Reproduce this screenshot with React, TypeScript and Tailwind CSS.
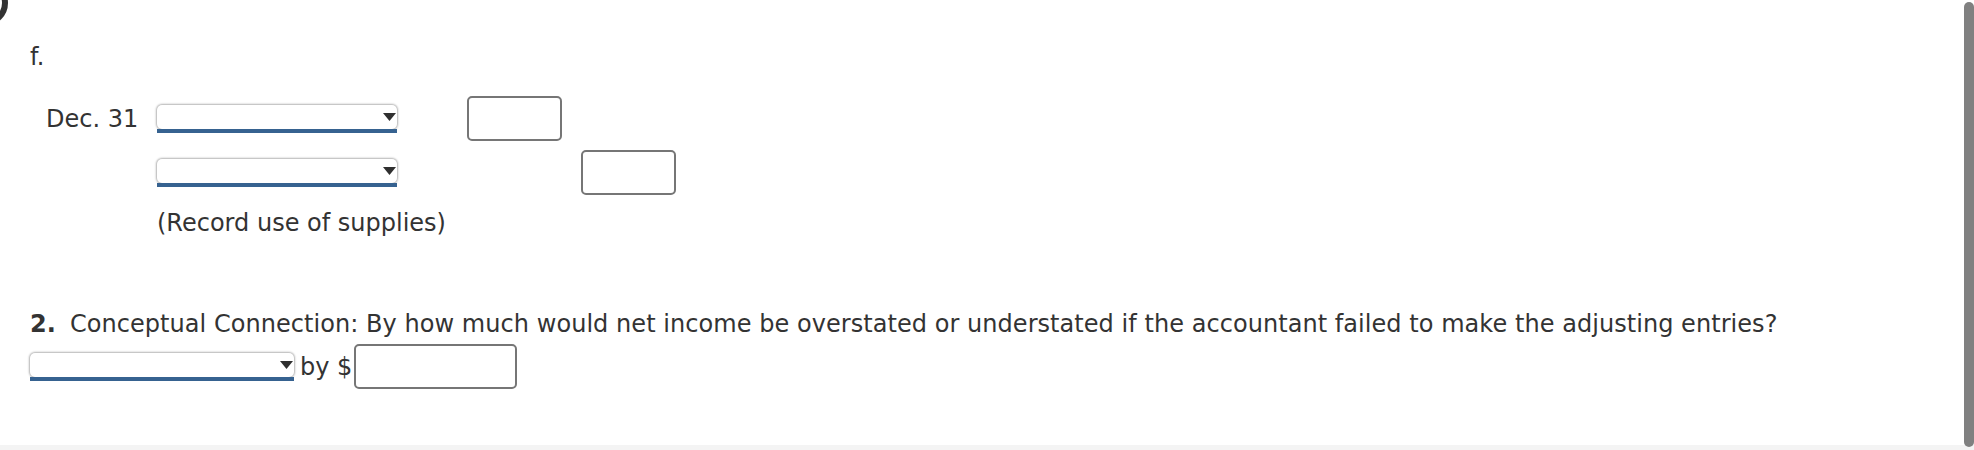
import React from 'react';

function Dropdown({ width }: { width: string }) {
  return (
    <div className={`${width} flex flex-col shrink-0`}>
      <div className="h-[24px] bg-white rounded-[5px] shadow-[0_0_2px_1px_rgba(0,0,0,0.3)] flex items-center justify-end pr-[1px]">
        <svg width="13" height="8" viewBox="0 0 13 8">
          <path d="M0 0 H13 L6.5 8 Z" fill="#2f2f2f" />
        </svg>
      </div>
      <div className="h-[4px] bg-[#366290]" />
    </div>
  );
}

function AmountBox({ width }: { width: string }) {
  return <div className={`${width} h-[45px] shrink-0 bg-white border-2 border-[#767676] rounded-[5px]`} />;
}

export default function App() {
  return (
    <div className="relative w-full h-[450px] overflow-hidden bg-white text-[#333] font-['DejaVu_Sans',Verdana,sans-serif] text-[24px] leading-[28px]">
      {/* leftover glyph from the part above */}
      <svg className="absolute top-0 left-0" width="12" height="24" viewBox="0 0 12 24">
        <circle cx="-15" cy="3" r="20" fill="none" stroke="#333" strokeWidth="6" />
      </svg>

      <div className="h-[445px] pl-[30px] flex flex-col">
        <div className="mt-[43px]">f.</div>

        {/* Dec. 31 entry */}
        <div className="mt-[25px] h-[45px] flex items-center">
          <div className="w-[127px] pl-[16px] shrink-0">Dec. 31</div>
          <Dropdown width="w-[240px]" />
          <div className="ml-[70px]">
            <AmountBox width="w-[95px]" />
          </div>
        </div>
        <div className="mt-[9px] h-[45px] flex items-center">
          <div className="w-[127px] shrink-0" />
          <Dropdown width="w-[240px]" />
          <div className="ml-[184px]">
            <AmountBox width="w-[95px]" />
          </div>
        </div>
        <div className="mt-[14px] pl-[127px]">(Record use of supplies)</div>

        {/* question 2 */}
        <div className="mt-[73px] tracking-[0.05px]">
          <strong className="font-bold">2.</strong>
          <span className="ml-[14px]">
            Conceptual Connection: By how much would net income be overstated or understated if the accountant failed to make the adjusting entries?
          </span>
        </div>
        <div className="mt-[6px] h-[45px] flex items-center">
          <Dropdown width="w-[264px]" />
          <span className="ml-[6px] whitespace-pre">by $</span>
          <div className="ml-[2px]">
            <AmountBox width="w-[163px]" />
          </div>
        </div>
      </div>
      <div className="h-[5px] bg-[#f4f4f4]" />

      {/* scroll thumb */}
      <div className="absolute right-0 top-[2px] bottom-[3px] w-[10px] rounded-full bg-[#808080]" />
    </div>
  );
}
